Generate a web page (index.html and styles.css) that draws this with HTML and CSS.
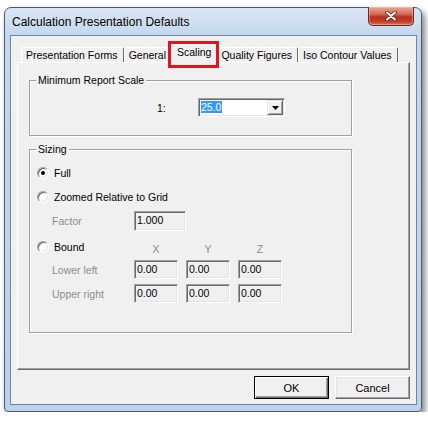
FILE: index.html
```html
<!DOCTYPE html>
<html>
<head>
<meta charset="utf-8">
<title>Calculation Presentation Defaults</title>
<link rel="stylesheet" href="styles.css">
</head>
<body>
<div class="window">
  <div class="titlebar">
    <span class="title">Calculation Presentation Defaults</span>
    <div class="close">
      <svg width="12" height="10" viewBox="0 0 12 10">
        <path d="M2 1.5 L10 8.5 M10 1.5 L2 8.5" stroke="#5a2018" stroke-width="3.6" stroke-linecap="round"/>
        <path d="M2 1.5 L10 8.5 M10 1.5 L2 8.5" stroke="#fff" stroke-width="2" stroke-linecap="round"/>
      </svg>
    </div>
  </div>
  <div class="client">
    <div class="tabs">
      <div class="tab">Presentation Forms</div>
      <div class="tab">General</div>
      <div class="tab active">Scaling</div>
      <div class="tab">Quality Figures</div>
      <div class="tab">Iso Contour Values</div>
    </div>
    <div class="panel">
      <fieldset class="group scale-group">
        <legend>Minimum Report Scale</legend>
        <div class="scale-row">
          <span class="scale-label">1:</span>
          <div class="combo">
            <span class="combo-text"><span class="selected">25.0</span></span>
            <span class="drop">
              <svg width="7" height="4" viewBox="0 0 7 4"><path d="M0 0 H7 L3.5 4 Z" fill="#000"/></svg>
            </span>
          </div>
        </div>
      </fieldset>
      <fieldset class="group sizing-group">
        <legend>Sizing</legend>
        <div class="row">
          <label class="option"><span class="radio checked"></span>Full</label>
        </div>
        <div class="row">
          <label class="option"><span class="radio"></span>Zoomed Relative to Grid</label>
        </div>
        <div class="row">
          <span class="field-label">Factor</span>
          <span class="textbox wide">1.000</span>
        </div>
        <div class="row bound-row">
          <label class="option"><span class="radio"></span>Bound</label>
          <span class="axis">X</span>
          <span class="axis">Y</span>
          <span class="axis">Z</span>
        </div>
        <div class="row short">
          <span class="field-label">Lower left</span>
          <span class="textbox">0.00</span>
          <span class="textbox">0.00</span>
          <span class="textbox">0.00</span>
        </div>
        <div class="row short gap-above">
          <span class="field-label">Upper right</span>
          <span class="textbox">0.00</span>
          <span class="textbox">0.00</span>
          <span class="textbox">0.00</span>
        </div>
      </fieldset>
    </div>
    <div class="buttons">
      <button class="btn default">OK</button>
      <button class="btn">Cancel</button>
    </div>
  </div>
</div>
</body>
</html>
```

FILE: styles.css
```css
* {
  box-sizing: border-box;
}

body {
  margin: 0;
  background: #ffffff;
  font-family: "Liberation Sans", Arial, sans-serif;
  font-size: 10.5px;
  color: #000;
}

.window {
  width: 418px;
  height: 405px;
  margin: 7px 0 0 4px;
  border: 1px solid #4a5a70;
  border-radius: 7px 7px 4px 4px;
  background: linear-gradient(#dae6f4, #c4d7ed 28px, #bcd1ea);
  padding: 0 4px 6px 5px;
  display: flex;
  flex-direction: column;
  box-shadow: 3px 4px 6px rgba(0, 0, 0, 0.5);
}

.titlebar {
  height: 27px;
  display: flex;
  align-items: flex-start;
  justify-content: space-between;
}

.title {
  font-size: 12px;
  line-height: 14px;
  padding: 7px 0 0 2px;
}

.close {
  width: 46px;
  height: 19px;
  margin: -1px 3px 0 0;
  border: 1px solid #6a2a20;
  border-top: none;
  border-radius: 0 0 5px 5px;
  background: linear-gradient(#e8a898, #d46a55 40%, #b9301c 55%, #c24026 80%, #d8705a);
  box-shadow: inset 0 0 0 1px rgba(255, 200, 190, 0.45);
  display: flex;
  align-items: center;
  justify-content: center;
}

.client {
  flex: 1;
  background: #f0f0f0;
  border: 1px solid #6f86a8;
  padding: 8px 6px 5px 6px;
  display: flex;
  flex-direction: column;
}

.tabs {
  height: 18px;
  display: flex;
  align-items: flex-end;
  padding-left: 4px;
}

.tab {
  height: 15px;
  padding: 1px 5px 0 4px;
  line-height: 13px;
  border: 1px solid;
  border-color: #ffffff #696969 transparent #ffffff;
  border-bottom: none;
  border-radius: 2px 2px 0 0;
  background: #f0f0f0;
  white-space: nowrap;
}

.tab.active {
  height: 19px;
  margin: 0 -2px -1px;
  padding: 1px 6px 0;
  position: relative;
  z-index: 1;
}

.tab.active::after {
  content: "";
  position: absolute;
  left: -3px;
  right: -2px;
  top: -4px;
  bottom: -5px;
  border: 3px solid #e2141c;
}

.panel {
  flex: 1;
  border: 1px solid;
  border-color: #ffffff #696969 #696969 #ffffff;
  box-shadow: inset -1px -1px 0 #a0a0a0;
  padding: 11px 0 0 11px;
}

.group {
  width: 323px;
  margin: 0;
  padding: 0;
  border: 1px solid #a0a0a0;
  box-shadow: inset 1px 1px 0 #ffffff, 1px 1px 0 #ffffff;
}

.group legend {
  margin-left: 6px;
  padding: 0 2px;
  line-height: 13px;
  background: #f0f0f0;
}

.scale-group {
  padding: 11px 0 18px;
}

.scale-row {
  display: flex;
  align-items: center;
  padding-left: 127px;
}

.scale-label {
  width: 41px;
}

.combo {
  width: 87px;
  height: 19px;
  background: #ffffff;
  border: 1px solid;
  border-color: #a0a0a0 #ffffff #ffffff #a0a0a0;
  box-shadow: inset 1px 1px 0 #696969, inset -1px -1px 0 #e3e3e3;
  display: flex;
  align-items: center;
  justify-content: space-between;
  padding: 1px 1px 1px 2px;
}

.combo-text {
  line-height: 13px;
}

.selected {
  background: #3399ff;
  color: #ffffff;
  padding: 0 1px 0 0;
}

.drop {
  width: 16px;
  height: 15px;
  background: #f0f0f0;
  border: 1px solid;
  border-color: #e3e3e3 #696969 #696969 #e3e3e3;
  box-shadow: inset 1px 1px 0 #ffffff, inset -1px -1px 0 #a0a0a0;
  display: flex;
  align-items: center;
  justify-content: center;
}

.sizing-group {
  margin-top: 7px;
  padding: 5px 0 28px;
}

.row {
  height: 24px;
  display: grid;
  grid-template-columns: 96px 44px 44px 44px;
  column-gap: 8px;
  align-items: center;
}

.bound-row {
  margin-top: 2px;
}

.row.short {
  height: 21px;
}

.row.gap-above {
  margin-top: 3px;
}

.option {
  display: flex;
  align-items: center;
  gap: 5px;
  padding-left: 7px;
  white-space: nowrap;
  grid-column: 1;
}

.row > .option:only-child {
  grid-column: 1 / -1;
}

.radio {
  width: 12px;
  height: 12px;
  border-radius: 50%;
  background: #ffffff;
  border: 1px solid;
  border-color: #a0a0a0 #ffffff #ffffff #a0a0a0;
  box-shadow: inset 1px 1px 0 #696969, inset -1px -1px 0 #e3e3e3;
  display: flex;
  align-items: center;
  justify-content: center;
}

.radio.checked::after {
  content: "";
  width: 4px;
  height: 4px;
  border-radius: 50%;
  background: #000;
}

.field-label {
  padding-left: 22px;
  color: #8d8d8d;
  white-space: nowrap;
}

.axis {
  text-align: center;
  color: #8d8d8d;
  padding-top: 4px;
}

.textbox {
  height: 19px;
  line-height: 15px;
  background: #f0f0f0;
  border: 1px solid;
  border-color: #a0a0a0 #ffffff #ffffff #a0a0a0;
  box-shadow: inset 1px 1px 0 #696969, inset -1px -1px 0 #e3e3e3;
  padding: 1px 0 0 2px;
}

.textbox.wide {
  width: 52px;
  height: 20px;
}

.buttons {
  display: flex;
  justify-content: flex-end;
  gap: 6px;
  margin-top: 6px;
}

.btn {
  width: 75px;
  height: 23px;
  padding: 0;
  font: inherit;
  font-size: 11px;
  color: #000;
  background: #f0f0f0;
  border: 1px solid;
  border-color: #ffffff #696969 #696969 #ffffff;
  box-shadow: inset -1px -1px 0 #a0a0a0, inset 1px 1px 0 #e3e3e3;
}

.btn.default {
  border-color: #000000;
  box-shadow: inset 1px 1px 0 #ffffff, inset -1px -1px 0 #696969, inset -2px -2px 0 #a0a0a0;
}
```
